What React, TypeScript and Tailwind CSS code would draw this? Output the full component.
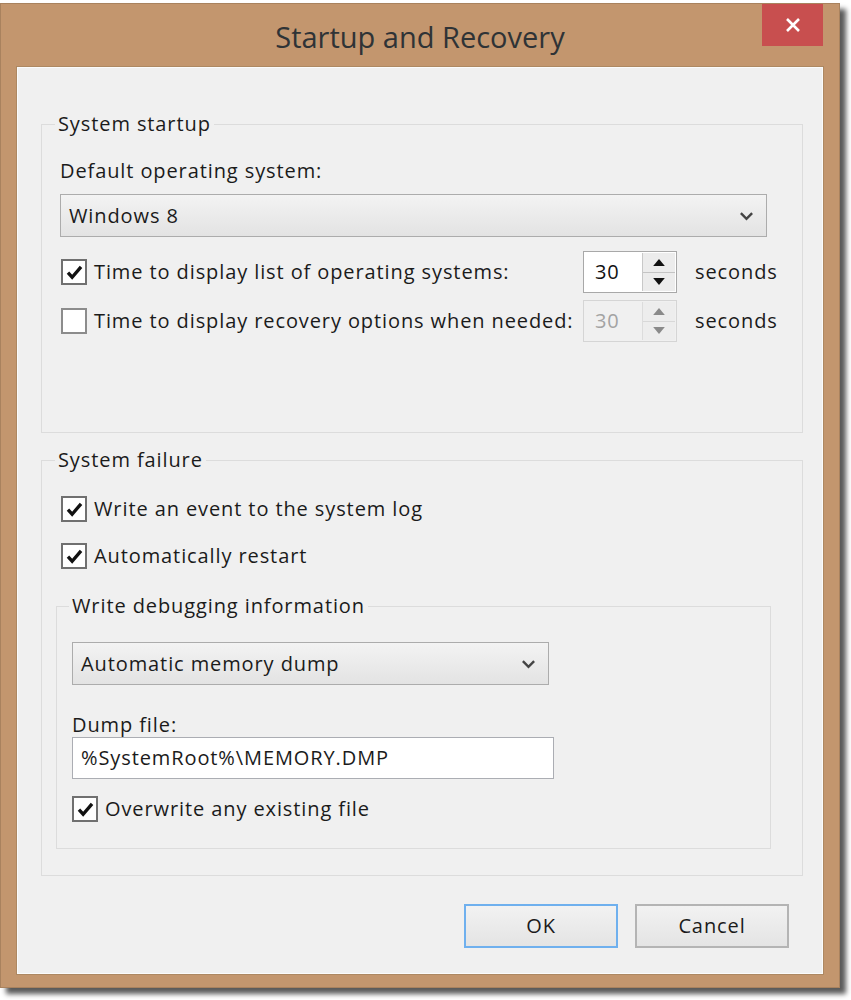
import React from 'react';

const font = { fontFamily: '"Open Sans", "Noto Sans", Arial, sans-serif' };

function Check({ checked }: { checked: boolean }) {
  return (
    <span
      className={`w-[26px] h-[26px] bg-white border-2 flex items-center justify-center shrink-0 ${
        checked ? 'border-[#707070]' : 'border-[#8c8c8c]'
      }`}
    >
      {checked && (
        <svg viewBox="0 0 16 16" className="w-[19px] h-[19px]">
          <path d="M2.5 8.2 L6 12 L13.5 3.2" fill="none" stroke="#111" strokeWidth="2.8" />
        </svg>
      )}
    </span>
  );
}

function Chevron() {
  return (
    <svg viewBox="0 0 16 10" className="w-[15px] h-[10px]">
      <path d="M2 2 L8 8 L14 2" fill="none" stroke="#444" strokeWidth="2.6" />
    </svg>
  );
}

function Combo({ text, width }: { text: string; width: string }) {
  return (
    <div
      className={`${width} h-[43px] flex items-center justify-between pl-[8px] pr-[12px] border border-[#acacac] bg-gradient-to-b from-[#f3f3f3] to-[#e3e3e3]`}
    >
      <span>{text}</span>
      <Chevron />
    </div>
  );
}

function Spin({ disabled }: { disabled?: boolean }) {
  const arrow = disabled ? '#8a8a8a' : '#111';
  return (
    <div
      className={`flex w-[94px] h-[42px] border shrink-0 ${
        disabled ? 'border-[#d5d5d5] bg-[#f0f0f0]' : 'border-[#a8a8a8] bg-white'
      }`}
    >
      <div className={`flex-1 flex items-center pl-[11px] ${disabled ? 'text-[#a3a3a3]' : 'text-[#111]'}`}>30</div>
      <div
        className={`w-[33px] flex flex-col border-l my-[1px] mr-[1px] ${
          disabled ? 'border-[#dcdcdc] bg-[#ededed]' : 'border-[#c8c8c8] bg-[#ececec]'
        }`}
      >
        <div className="flex-1 flex items-center justify-center">
          <svg viewBox="0 0 10 6" className="w-[12px] h-[7px]">
            <path d="M0 6 L5 0 L10 6 Z" fill={arrow} />
          </svg>
        </div>
        <div className={`h-px ${disabled ? 'bg-[#d8d8d8]' : 'bg-[#c4c4c4]'}`} />
        <div className="flex-1 flex items-center justify-center">
          <svg viewBox="0 0 10 6" className="w-[12px] h-[7px]">
            <path d="M0 0 L10 0 L5 6 Z" fill={arrow} />
          </svg>
        </div>
      </div>
    </div>
  );
}

function CheckRow({ checked, label }: { checked: boolean; label: string }) {
  return (
    <div className="flex items-center gap-[7px] h-[26px]">
      <Check checked={checked} />
      <span>{label}</span>
    </div>
  );
}

function Button({ label, primary }: { label: string; primary?: boolean }) {
  return (
    <div
      className={`w-[154px] h-[44px] flex items-center justify-center bg-gradient-to-b from-[#f2f2f2] to-[#e4e4e4] ${
        primary ? 'border-2 border-[#6fb0ee]' : 'border-2 border-[#b4b4b4]'
      }`}
    >
      {label}
    </div>
  );
}

export default function App() {
  return (
    <div className="w-[851px] h-[1000px] bg-white overflow-hidden" style={font}>
      <div className="w-[840px] mt-[3px] bg-[#c3966e] border border-[#a9825e] shadow-[6px_6px_5px_rgba(0,0,0,0.65)] relative">
        {/* Title bar */}
        <div className="h-[63px] flex items-center justify-center">
          <span className="text-[29px] text-[#2f3336] mt-[2px]">Startup and Recovery</span>
        </div>
        <div className="absolute top-0 right-[16px] w-[61px] h-[42px] bg-[#c84f4f] flex items-center justify-center">
          <svg viewBox="0 0 16 16" className="w-[16px] h-[16px]">
            <path d="M2 2 L14 14 M14 2 L2 14" stroke="#fff" strokeWidth="2.6" />
          </svg>
        </div>

        {/* Client area */}
        <div className="mx-[16px] mb-[13px] bg-[#f0f0f0] border border-[#fbfbfb] shadow-[0_0_0_1px_#ad8862] text-[20px] tracking-[0.9px] text-[#1b1b1b] leading-[24px] pl-[23px] pr-[19px] pb-[25px] flex flex-col">
          {/* System startup */}
          <fieldset className="min-w-0 mt-[44px] border border-[#dcdcdc] pl-[18px] pr-[35px] pb-[90px]">
            <legend className="px-[3px] -ml-[5px] h-[24px]">System startup</legend>
            <div className="mt-[23px] h-[24px]">Default operating system:</div>
            <div className="mt-[11px]">
              <Combo text="Windows 8" width="w-[707px]" />
            </div>
            <div className="mt-[14px] flex items-center h-[42px] ml-[1px]">
              <Check checked />
              <span className="w-[496px] pl-[7px] shrink-0">Time to display list of operating systems:</span>
              <Spin />
              <span className="ml-[18px] shrink-0">seconds</span>
            </div>
            <div className="mt-[7px] flex items-center h-[42px] ml-[1px]">
              <Check checked={false} />
              <span className="w-[496px] pl-[7px] shrink-0">Time to display recovery options when needed:</span>
              <Spin disabled />
              <span className="ml-[18px] shrink-0">seconds</span>
            </div>
          </fieldset>

          {/* System failure */}
          <fieldset className="min-w-0 mt-[15px] border border-[#dcdcdc] pl-[14px] pr-[31px] pb-[26px]">
            <legend className="px-[3px] -ml-[1px] h-[24px]">System failure</legend>
            <div className="mt-[24px] ml-[5px]">
              <CheckRow checked label="Write an event to the system log" />
            </div>
            <div className="mt-[21px] ml-[5px]">
              <CheckRow checked label="Automatically restart" />
            </div>

            <fieldset className="min-w-0 mt-[25px] border border-[#dcdcdc] pl-[15px] pb-[26px]">
              <legend className="px-[3px] -ml-[3px] h-[24px]">Write debugging information</legend>
              <div className="mt-[24px]">
                <Combo text="Automatic memory dump" width="w-[477px]" />
              </div>
              <div className="mt-[29px] h-[22px] leading-[22px]">Dump file:</div>
              <div className="mt-[1px] w-[482px] h-[42px] bg-white border border-[#abadb3] flex items-center pl-[8px]">
                %SystemRoot%\MEMORY.DMP
              </div>
              <div className="mt-[17px]">
                <CheckRow checked label="Overwrite any existing file" />
              </div>
            </fieldset>
          </fieldset>

          {/* Buttons */}
          <div className="mt-[28px] flex justify-end gap-[17px] pr-[14px]">
            <Button label="OK" primary />
            <Button label="Cancel" />
          </div>
        </div>
      </div>
    </div>
  );
}
